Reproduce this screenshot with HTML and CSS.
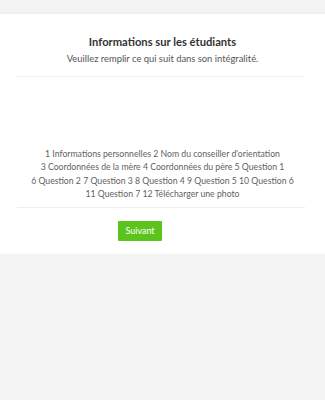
FILE: index.html
```html
<!DOCTYPE html>
<html lang="fr">
<head>
<meta charset="utf-8">
<link rel="stylesheet" href="styles.css">
</head>
<body>
<div class="card">
  <div class="header">
    <h1 class="title">Informations sur les étudiants</h1>
    <p class="subtitle">Veuillez remplir ce qui suit dans son intégralité.</p>
  </div>
  <div class="divider"></div>
  <div class="body"></div>
  <div class="steps">
    <span class="step">1 Informations personnelles</span>
    <span class="step">2 Nom du conseiller d'orientation</span>
    <span class="step">3 Coordonnées de la mère</span>
    <span class="step">4 Coordonnées du père</span>
    <span class="step">5 Question 1</span>
    <span class="step">6 Question 2</span>
    <span class="step">7 Question 3</span>
    <span class="step">8 Question 4</span>
    <span class="step">9 Question 5</span>
    <span class="step">10 Question 6</span>
    <span class="step">11 Question 7</span>
    <span class="step">12 Télécharger une photo</span>
  </div>
  <div class="divider"></div>
  <div class="actions">
    <button class="btn-next">Suivant</button>
  </div>
</div>
</body>
</html>
```
FILE: styles.css
```css
html, body {
  margin: 0;
  padding: 0;
  background: #f3f3f3;
  font-family: "Lato", "Open Sans", sans-serif;
}
.card {
  margin-top: 14px;
  background: #fff;
  height: 240px;
  box-shadow: 0 1px 3px rgba(0,0,0,0.12);
  display: flex;
  flex-direction: column;
}
.header {
  text-align: center;
  padding-top: 20px;
}
.title {
  margin: 0;
  font-size: 11.2px;
  font-weight: 700;
  color: #333;
  line-height: 16px;
}
.subtitle {
  margin: 2px 0 0;
  font-size: 9.4px;
  color: #555;
  line-height: 14px;
}
.divider {
  margin: 0 20px 0 17px;
  height: 1px;
  background: #eeeeee;
}
.header + .divider {
  margin-top: 10px;
}
.body {
  height: 70px;
}
.steps {
  text-align: center;
  font-size: 8.7px;
  line-height: 13.3px;
  color: #5f5f5f;
  padding: 0 27px;
  margin-bottom: 7px;
}
.step {
  display: inline-block;
  white-space: nowrap;
}
.actions {
  padding: 10px 0 0 118px;
}
.btn-next {
  border: none;
  background: #5bc41c;
  color: #fff;
  font-family: inherit;
  font-size: 9px;
  width: 44px;
  height: 20px;
  padding: 0;
  border-radius: 1px;
}
```
